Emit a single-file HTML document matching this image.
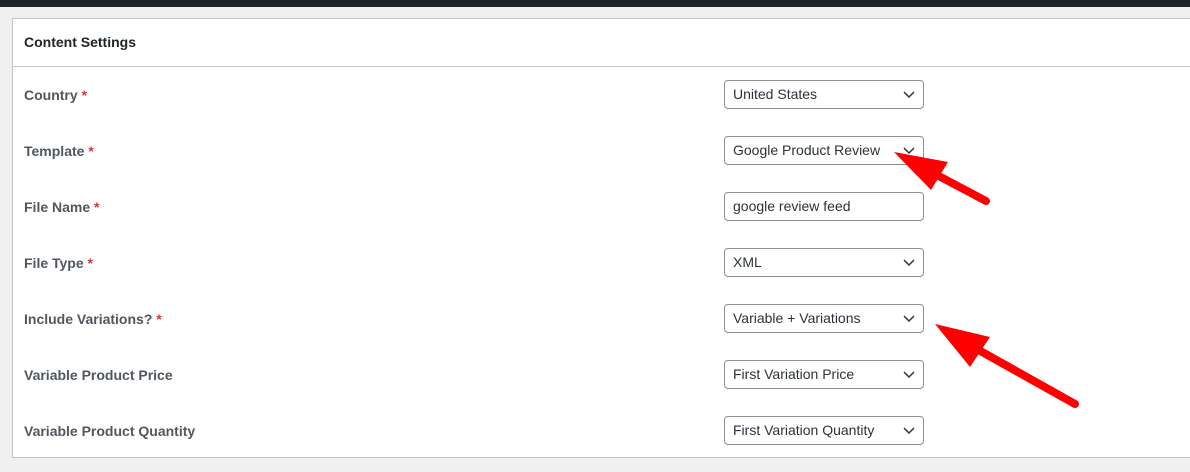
<!DOCTYPE html>
<html><head><style>
body{margin:0;width:1190px;height:472px;background:#f0f0f1;font-family:"Liberation Sans",Arial,sans-serif;position:relative;overflow:hidden}
.top{position:absolute;left:0;top:0;width:1190px;height:7px;background:#1d2327}
.panel{position:absolute;left:12px;top:18px;width:1190px;height:440px;background:#fff;border:1px solid #c3c4c7;box-sizing:border-box}
.hd{height:47px;border-bottom:1px solid #c3c4c7;font-weight:bold;font-size:14px;color:#1d2327;line-height:47px;padding-left:11px}
.row{position:absolute;left:11px;font-weight:bold;font-size:14px;color:#50575e}
.row span{color:#d63638}
.f{position:absolute;left:711px;width:200px;height:29px;border:1px solid #8c8f94;border-radius:4px;box-sizing:border-box;font-size:14px;color:#2c3338;line-height:27px;padding-left:8px}
.f svg{position:absolute;right:8px;top:10px}
</style></head><body>
<div class="top"></div>
<div class="panel">
<div class="hd">Content Settings</div>
<div class="row" style="top:68px">Country <span>*</span></div>
<div class="f" style="top:61px">United States<svg width="12" height="8"><path d="M1 1l5 5 5-5" stroke="#2c3338" stroke-width="1.5" fill="none"/></svg></div>
<div class="row" style="top:124px">Template <span>*</span></div>
<div class="f" style="top:117px">Google Product Review<svg width="12" height="8"><path d="M1 1l5 5 5-5" stroke="#2c3338" stroke-width="1.5" fill="none"/></svg></div>
<div class="row" style="top:180px">File Name <span>*</span></div>
<div class="f" style="top:173px">google review feed</div>
<div class="row" style="top:236px">File Type <span>*</span></div>
<div class="f" style="top:229px">XML<svg width="12" height="8"><path d="M1 1l5 5 5-5" stroke="#2c3338" stroke-width="1.5" fill="none"/></svg></div>
<div class="row" style="top:292px">Include Variations? <span>*</span></div>
<div class="f" style="top:285px">Variable + Variations<svg width="12" height="8"><path d="M1 1l5 5 5-5" stroke="#2c3338" stroke-width="1.5" fill="none"/></svg></div>
<div class="row" style="top:348px">Variable Product Price</div>
<div class="f" style="top:341px">First Variation Price<svg width="12" height="8"><path d="M1 1l5 5 5-5" stroke="#2c3338" stroke-width="1.5" fill="none"/></svg></div>
<div class="row" style="top:404px">Variable Product Quantity</div>
<div class="f" style="top:397px">First Variation Quantity<svg width="12" height="8"><path d="M1 1l5 5 5-5" stroke="#2c3338" stroke-width="1.5" fill="none"/></svg></div>
</div>
<svg style="position:absolute;left:0;top:0" width="1190" height="472">
<path d="M986 201L935 174" stroke="#f00" stroke-width="8" stroke-linecap="round"/>
<path d="M894 152L948 162L931 190Z" fill="#f00"/>
<path d="M1075 404L975 348" stroke="#f00" stroke-width="8" stroke-linecap="round"/>
<path d="M935 324L990 337L970 367Z" fill="#f00"/>
</svg>
</body></html>
